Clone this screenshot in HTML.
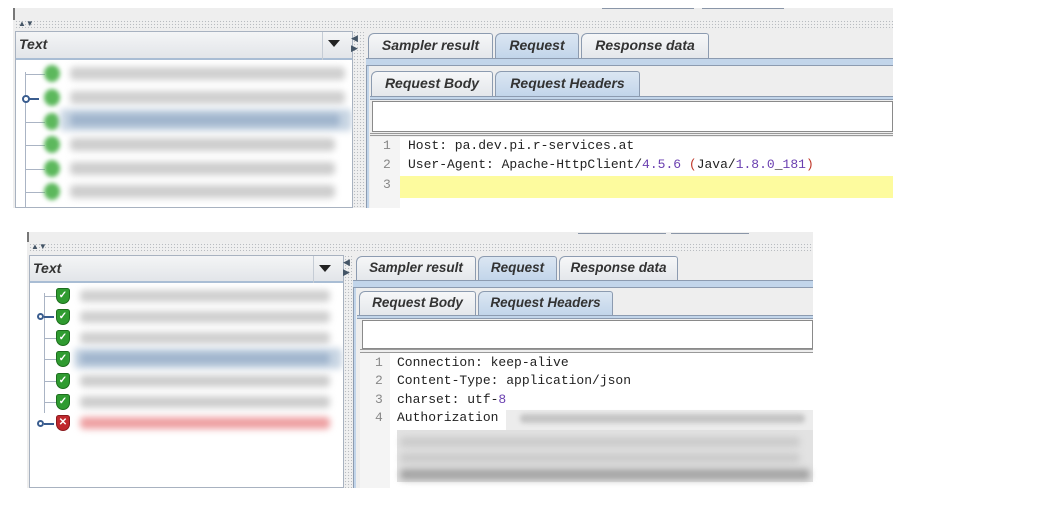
<!DOCTYPE html>
<html><head><style>
*{margin:0;padding:0;box-sizing:border-box}
body{width:1038px;height:518px;background:#fff;position:relative;overflow:hidden;font-family:"Liberation Sans",sans-serif}
.a{position:absolute}
.tab{position:absolute;font-style:italic;font-weight:bold;color:#333;font-size:14px;border:1px solid #8c9bb0;border-bottom:none;border-radius:6px 3px 0 0;background:linear-gradient(#f6f7f8,#e4e7eb);text-align:center;line-height:22px}
.sel{background:linear-gradient(#dbe6f2,#c2d5ea)}
.dots{background-image:radial-gradient(#b9bcc0 0.7px,transparent 0.8px);background-size:3px 3px;background-color:#f0f0f0}
.code{position:absolute;font-family:"Liberation Mono",monospace;font-size:13px;color:#222;white-space:pre}
.num{position:absolute;font-family:"Liberation Mono",monospace;font-size:13px;color:#888}
.blur{position:absolute;filter:blur(3.5px);border-radius:4px}
.dot{position:absolute;width:16px;height:17px;border-radius:50%;background:#5cb85c;filter:blur(2px)}
.sh{position:absolute;width:14px;height:16px;background:#2f9b30;border:1px solid #1d6e1d;border-radius:3px 3px 8px 8px;color:#fff;font-size:10px;line-height:13px;text-align:center;font-weight:bold}
.st{position:absolute;height:1px;background:#aab4c4}
</style></head><body>

<div class="a" style="left:13px;top:8px;width:880px;height:200px;background:#eeeeee"></div>
<div class="a" style="left:13px;top:8px;width:2px;height:12px;background:#777"></div>
<div class="a" style="left:602px;top:8px;width:92px;height:1px;background:#8a96a8"></div>
<div class="a" style="left:702px;top:8px;width:82px;height:1px;background:#8a96a8"></div>
<div class="a dots" style="left:15px;top:20px;width:878px;height:8px"></div>
<div class="a" style="left:18px;top:19px;font-size:8px;color:#456">▲▼</div>
<div class="a" style="left:15px;top:31px;width:338px;height:177px;background:#fff;border:1px solid #a8b2c0"></div>
<div class="a" style="left:16px;top:32px;width:336px;height:28px;background:linear-gradient(#f4f5f6,#e2e5e9);border-bottom:2px solid #a9bdd4"></div>
<div class="a" style="left:19px;top:36px;font-size:14px;font-style:italic;font-weight:bold;color:#333">Text</div>
<div class="a" style="left:322px;top:32px;width:1px;height:28px;background:#c5ccd5"></div>
<div class="a" style="left:328px;top:40px;width:0;height:0;border-left:6px solid transparent;border-right:6px solid transparent;border-top:7px solid #222"></div>
<div class="a" style="left:25px;top:72px;width:1px;height:136px;background:#aab4c4"></div>
<div class="st" style="left:25px;top:74px;width:20px"></div>
<div class="st" style="left:25px;top:122px;width:20px"></div>
<div class="st" style="left:25px;top:145px;width:20px"></div>
<div class="st" style="left:25px;top:169px;width:20px"></div>
<div class="st" style="left:25px;top:192px;width:20px"></div>
<div class="a" style="left:22px;top:95px;width:8px;height:8px;border:2px solid #3a5d8f;border-radius:50%;background:#fff"></div>
<div class="a" style="left:29px;top:98px;width:10px;height:2px;background:#3a5d8f"></div>
<div class="dot" style="left:44px;top:65px"></div>
<div class="dot" style="left:44px;top:89px"></div>
<div class="dot" style="left:44px;top:113px"></div>
<div class="dot" style="left:44px;top:136px"></div>
<div class="dot" style="left:44px;top:160px"></div>
<div class="dot" style="left:44px;top:183px"></div>
<div class="blur" style="left:70px;top:67px;width:275px;height:13px;background:#cfcfcf"></div>
<div class="blur" style="left:70px;top:91px;width:275px;height:13px;background:#cfcfcf"></div>
<div class="blur" style="left:60px;top:109px;width:292px;height:22px;background:#c9d6e4"></div>
<div class="blur" style="left:70px;top:114px;width:270px;height:12px;background:#9fb4cc"></div>
<div class="blur" style="left:70px;top:138px;width:265px;height:13px;background:#cdcdcd"></div>
<div class="blur" style="left:70px;top:162px;width:265px;height:13px;background:#cdcdcd"></div>
<div class="blur" style="left:70px;top:185px;width:265px;height:13px;background:#cdcdcd"></div>
<div class="a dots" style="left:353px;top:31px;width:12px;height:177px"></div>
<div class="a" style="left:351px;top:33px;font-size:9px;color:#456;line-height:10px">◀<br>▶</div>
<div class="a" style="left:365px;top:31px;width:528px;height:177px;background:#eeeeee"></div>
<div class="tab" style="left:368px;top:33px;width:125px;height:25px">Sampler result</div>
<div class="tab sel" style="left:495px;top:33px;width:84px;height:25px">Request</div>
<div class="tab" style="left:581px;top:33px;width:128px;height:25px">Response data</div>
<div class="a" style="left:366px;top:58px;width:527px;height:8px;background:#c2d5ea;border-top:1px solid #8c9bb0;border-bottom:1px solid #8c9bb0"></div>
<div class="a" style="left:366px;top:66px;width:3px;height:142px;background:#c2d5ea;border-left:1px solid #8c9bb0"></div>
<div class="tab" style="left:371px;top:71px;width:122px;height:25px">Request Body</div>
<div class="tab sel" style="left:495px;top:71px;width:145px;height:25px">Request Headers</div>
<div class="a" style="left:370px;top:96px;width:523px;height:4px;background:#c2d5ea;border-top:1px solid #8c9bb0;border-bottom:1px solid #8c9bb0"></div>
<div class="a" style="left:372px;top:101px;width:521px;height:31px;background:#fff;border:1px solid #8a8a8a"></div>
<div class="a" style="left:370px;top:133px;width:523px;height:3px;border-top:1px solid #999;border-bottom:1px solid #999"></div>
<div class="a" style="left:370px;top:137px;width:523px;height:71px;background:#fff"></div>
<div class="a" style="left:370px;top:137px;width:30px;height:71px;background:#f4f4f4"></div>
<div class="a" style="left:400px;top:176px;width:493px;height:22px;background:#fdfb9e"></div>
<div class="num" style="left:383px;top:138px">1</div>
<div class="num" style="left:383px;top:157px">2</div>
<div class="num" style="left:383px;top:177px">3</div>
<div class="code" style="left:408px;top:138px">Host: pa.dev.pi.r-services.at</div>
<div class="code" style="left:408px;top:157px">User-Agent: Apache-HttpClient/<span style="color:#6a3fb0">4.5.6</span> <span style="color:#c0392b">(</span>Java/<span style="color:#6a3fb0">1.8.0</span>_<span style="color:#6a3fb0">181</span><span style="color:#c0392b">)</span></div>

<div class="a" style="left:27px;top:232px;width:786px;height:256px;background:#eeeeee"></div>
<div class="a" style="left:27px;top:232px;width:2px;height:10px;background:#777"></div>
<div class="a" style="left:578px;top:233px;width:88px;height:1px;background:#8a96a8"></div>
<div class="a" style="left:671px;top:233px;width:78px;height:1px;background:#8a96a8"></div>
<div class="a dots" style="left:29px;top:243px;width:784px;height:8px"></div>
<div class="a" style="left:31px;top:242px;font-size:8px;color:#456">▲▼</div>
<div class="a" style="left:29px;top:255px;width:315px;height:233px;background:#fff;border:1px solid #a8b2c0"></div>
<div class="a" style="left:30px;top:256px;width:313px;height:27px;background:linear-gradient(#f4f5f6,#e2e5e9);border-bottom:2px solid #a9bdd4"></div>
<div class="a" style="left:33px;top:260px;font-size:14px;font-style:italic;font-weight:bold;color:#333">Text</div>
<div class="a" style="left:313px;top:256px;width:1px;height:27px;background:#c5ccd5"></div>
<div class="a" style="left:319px;top:265px;width:0;height:0;border-left:6px solid transparent;border-right:6px solid transparent;border-top:7px solid #222"></div>
<div class="a" style="left:44px;top:293px;width:1px;height:120px;background:#aab4c4"></div>
<div class="st" style="left:44px;top:296px;width:14px"></div>
<div class="st" style="left:44px;top:338px;width:14px"></div>
<div class="st" style="left:44px;top:359px;width:14px"></div>
<div class="st" style="left:44px;top:381px;width:14px"></div>
<div class="st" style="left:44px;top:402px;width:14px"></div>
<div class="a" style="left:37px;top:313px;width:7px;height:7px;border:2px solid #3a5d8f;border-radius:50%;background:#fff"></div>
<div class="a" style="left:44px;top:316px;width:10px;height:2px;background:#3a5d8f"></div>
<div class="a" style="left:37px;top:420px;width:7px;height:7px;border:2px solid #3a5d8f;border-radius:50%;background:#fff"></div>
<div class="a" style="left:44px;top:423px;width:10px;height:2px;background:#3a5d8f"></div>
<div class="sh" style="left:56px;top:288px">✓</div>
<div class="sh" style="left:56px;top:309px">✓</div>
<div class="sh" style="left:56px;top:330px">✓</div>
<div class="sh" style="left:56px;top:351px">✓</div>
<div class="sh" style="left:56px;top:373px">✓</div>
<div class="sh" style="left:56px;top:394px">✓</div>
<div class="sh" style="left:56px;top:415px;background:#c0282d;border-color:#8a1a1e">✕</div>
<div class="blur" style="left:80px;top:290px;width:250px;height:12px;background:#cfcfcf"></div>
<div class="blur" style="left:80px;top:311px;width:250px;height:12px;background:#cfcfcf"></div>
<div class="blur" style="left:80px;top:332px;width:250px;height:12px;background:#cfcfcf"></div>
<div class="blur" style="left:74px;top:348px;width:268px;height:21px;background:#c9d6e4"></div>
<div class="blur" style="left:80px;top:353px;width:250px;height:11px;background:#9fb4cc"></div>
<div class="blur" style="left:80px;top:375px;width:250px;height:12px;background:#cdcdcd"></div>
<div class="blur" style="left:80px;top:396px;width:250px;height:12px;background:#cdcdcd"></div>
<div class="blur" style="left:80px;top:417px;width:250px;height:12px;background:#eea0a2"></div>
<div class="a dots" style="left:344px;top:255px;width:8px;height:233px"></div>
<div class="a" style="left:343px;top:257px;font-size:9px;color:#456;line-height:10px">◀<br>▶</div>
<div class="tab" style="left:356px;top:256px;width:120px;height:24px;font-size:13.5px;line-height:21px">Sampler result</div>
<div class="tab sel" style="left:478px;top:256px;width:79px;height:24px;font-size:13.5px;line-height:21px">Request</div>
<div class="tab" style="left:559px;top:256px;width:119px;height:24px;font-size:13.5px;line-height:21px">Response data</div>
<div class="a" style="left:353px;top:280px;width:460px;height:8px;background:#c2d5ea;border-top:1px solid #8c9bb0;border-bottom:1px solid #8c9bb0"></div>
<div class="a" style="left:353px;top:288px;width:3px;height:200px;background:#c2d5ea;border-left:1px solid #8c9bb0"></div>
<div class="tab" style="left:359px;top:291px;width:117px;height:24px;font-size:13.5px;line-height:21px">Request Body</div>
<div class="tab sel" style="left:478px;top:291px;width:135px;height:24px;font-size:13.5px;line-height:21px">Request Headers</div>
<div class="a" style="left:357px;top:315px;width:456px;height:4px;background:#c2d5ea;border-top:1px solid #8c9bb0;border-bottom:1px solid #8c9bb0"></div>
<div class="a" style="left:362px;top:320px;width:451px;height:29px;background:#fff;border:1px solid #8a8a8a"></div>
<div class="a" style="left:360px;top:349px;width:453px;height:4px;border-top:1px solid #999;border-bottom:1px solid #999"></div>
<div class="a" style="left:360px;top:353px;width:453px;height:135px;background:#fff"></div>
<div class="a" style="left:360px;top:353px;width:30px;height:135px;background:#f4f4f4"></div>
<div class="num" style="left:375px;top:355px">1</div>
<div class="num" style="left:375px;top:373px">2</div>
<div class="num" style="left:375px;top:392px">3</div>
<div class="num" style="left:375px;top:410px">4</div>
<div class="code" style="left:397px;top:355px">Connection: keep-alive</div>
<div class="code" style="left:397px;top:373px">Content-Type: application/json</div>
<div class="code" style="left:397px;top:392px">charset: utf-<span style="color:#6a3fb0">8</span></div>
<div class="code" style="left:397px;top:410px">Authorization</div>
<div class="a" style="left:506px;top:410px;width:307px;height:20px;background:#ececec"></div>
<div class="blur" style="left:520px;top:414px;width:285px;height:9px;background:#c4c4c4;filter:blur(2.5px)"></div>
<div class="a" style="left:397px;top:430px;width:416px;height:52px;background:#e2e2e2"></div>
<div class="blur" style="left:400px;top:437px;width:400px;height:10px;background:#cbcbcb"></div>
<div class="blur" style="left:400px;top:453px;width:400px;height:10px;background:#cbcbcb"></div>
<div class="blur" style="left:400px;top:469px;width:410px;height:11px;background:#a4a4a4"></div>
</body></html>
